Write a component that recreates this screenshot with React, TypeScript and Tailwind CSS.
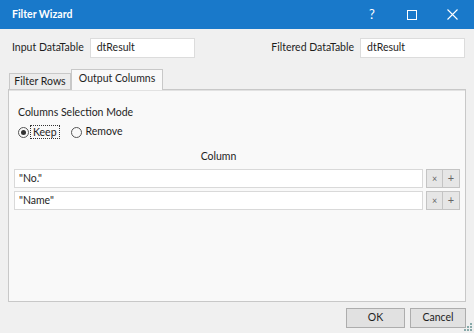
export default function App() {
  const rows = ['"No."', '"Name"'];
  return (
    <div className="w-[474px] h-[333px] bg-[#f0f0f0] flex flex-col font-['Lato',sans-serif] text-[10.5px] text-[#1e1e1e] overflow-hidden relative">
      {/* title bar */}
      <div className="h-[29px] bg-[#1979ca] flex items-center pl-[12px] text-white shrink-0">
        <span className="font-bold text-[10.5px]">Filter Wizard</span>
        <div className="ml-auto flex items-center h-full pr-[2px]">
          <span className="w-[40px] text-center text-[13px]">?</span>
          <span className="w-[40px] flex justify-center">
            <span className="w-[10px] h-[10px] border border-white" />
          </span>
          <span className="w-[40px] flex justify-center">
            <svg width="11" height="11" viewBox="0 0 11 11">
              <path d="M0.5 0.5L10.5 10.5M10.5 0.5L0.5 10.5" stroke="white" strokeWidth="1.1" />
            </svg>
          </span>
        </div>
      </div>

      {/* data table row */}
      <div className="flex items-center h-[20px] mt-[9px] pl-[12px] pr-[9px]">
        <span>Input DataTable</span>
        <div className="ml-[6px] w-[105px] h-[20px] bg-white border border-[#dcdcdc] flex items-center pl-[6px]">dtResult</div>
        <span className="ml-auto">Filtered DataTable</span>
        <div className="ml-[6px] w-[105px] h-[20px] bg-white border border-[#dcdcdc] flex items-center pl-[6px]">dtResult</div>
      </div>

      {/* tabs */}
      <div className="flex items-end h-[20px] mt-[11px] pl-[9px] relative z-10">
        <div className="h-[16px] w-[62px] border border-b-0 border-[#c8c8c8] bg-[#ececec] flex items-center justify-center">Filter Rows</div>
        <div className="h-[21px] w-[92px] -mb-[1px] border border-b-0 border-[#c8c8c8] bg-[#f9f9f9] flex items-center justify-center pb-[3px]">Output Columns</div>
      </div>

      {/* panel */}
      <div className="mx-[8px] w-[458px] h-[213px] bg-[#f9f9f9] border border-[#c8c8c8] shadow-[inset_0_1px_0_#e2e2e2] px-[5px]">
        <div className="pl-[4px] mt-[14px] leading-[16px]">Columns Selection Mode</div>
        <div className="flex items-center mt-[5px] pl-[4px] h-[14px]">
          <span className="w-[11px] h-[11px] rounded-full border border-[#555] flex items-center justify-center">
            <span className="w-[5px] h-[5px] rounded-full bg-[#333]" />
          </span>
          <span className="ml-[1px] px-[2px] border border-dotted border-[#333] leading-[12px]">Keep</span>
          <span className="ml-[11px] w-[11px] h-[11px] rounded-full border border-[#555]" />
          <span className="ml-[4px]">Remove</span>
        </div>
        <div className="flex mt-[9px]">
          <div className="w-[409px] text-center leading-[16px]">Column</div>
        </div>
        <div className="flex flex-col gap-[3px] mt-[5px]">
          {rows.map((r) => (
            <div key={r} className="flex items-center h-[19px]">
              <div className="w-[409px] h-[19px] bg-white border border-[#d9d9d9] flex items-center pl-[4px]">{r}</div>
              <div className="ml-[3px] w-[17px] h-[19px] bg-[#e6e6e6] border border-[#c4c4c4] flex items-center justify-center text-[9px] text-[#666]">×</div>
              <div className="w-[17px] h-[19px] bg-[#e6e6e6] border border-l-0 border-[#c4c4c4] flex items-center justify-center text-[11px] text-[#666]">+</div>
            </div>
          ))}
        </div>
      </div>

      {/* buttons */}
      <div className="flex justify-end gap-[5px] mt-[6px] pr-[8px]">
        <div className="w-[59px] h-[20px] bg-[#e1e1e1] border border-[#adadad] flex items-center justify-center">OK</div>
        <div className="w-[56px] h-[20px] bg-[#e1e1e1] border border-[#adadad] flex items-center justify-center">Cancel</div>
      </div>
      <div className="absolute right-[2px] bottom-[2px] grid grid-cols-3 gap-[1px]">
        <span />
        <span />
        <span className="w-[2px] h-[2px] bg-[#8aa]" />
        <span />
        <span className="w-[2px] h-[2px] bg-[#8aa]" />
        <span className="w-[2px] h-[2px] bg-[#8aa]" />
        <span className="w-[2px] h-[2px] bg-[#8aa]" />
        <span className="w-[2px] h-[2px] bg-[#8aa]" />
        <span className="w-[2px] h-[2px] bg-[#8aa]" />
      </div>
    </div>
  );
}
